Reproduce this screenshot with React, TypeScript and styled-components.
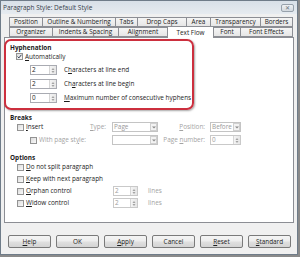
import React from "react";
import styled, { createGlobalStyle } from "styled-components";

const Global = createGlobalStyle`
  html, body { margin: 0; padding: 0; background: #8a8a8a; }
  body {
    font-family: "Open Sans", "Noto Sans", sans-serif;
    font-size: 6.4px;
    color: #1c1c1c;
  }
  * { box-sizing: border-box; }
`;

const Window = styled.div`
  width: 298px;
  height: 255px;
  border: 1px solid #6f7c89;
  background: #f0f0f0;
  display: flex;
  flex-direction: column;
`;

const TitleBar = styled.div`
  height: 13px;
  flex: none;
  display: flex;
  align-items: center;
  justify-content: space-between;
  padding: 0 3px 0 2px;
  background: linear-gradient(#d8e0e8, #e6ebf0);
  color: #36404a;
  font-size: 6.5px;
`;

const CloseButton = styled.div`
  width: 13px;
  height: 8px;
  border: 1px solid #97a1ab;
  border-radius: 2px;
  background: linear-gradient(#eef1f4, #d3d9df);
  display: flex;
  align-items: center;
  justify-content: center;
  color: #6b7580;
  font-size: 6px;
  line-height: 6px;
`;

const Body = styled.div`
  flex: 1;
  display: flex;
  flex-direction: column;
  padding: 3px 3px 0 3px;
`;

const TabStrip = styled.div`
  display: flex;
  flex-direction: column;
  padding-left: 5px;
`;

const TabRow = styled.div`
  display: flex;
  align-items: flex-end;
  height: 10px;
`;

const Tab = styled.div<{ $w: number; $active?: boolean }>`
  width: ${(p) => p.$w}px;
  height: ${(p) => (p.$active ? 12 : 10)}px;
  margin-bottom: ${(p) => (p.$active ? -1 : 0)}px;
  position: relative;
  z-index: ${(p) => (p.$active ? 2 : 0)};
  border: 1px solid #8c8e94;
  border-bottom: ${(p) => (p.$active ? "none" : "1px solid #8c8e94")};
  border-right: none;
  background: ${(p) =>
    p.$active ? "#ffffff" : "linear-gradient(#f5f5f5, #e6e6e6)"};
  display: flex;
  align-items: center;
  justify-content: center;
  white-space: nowrap;
  line-height: 8px;
  &:last-child {
    border-right: 1px solid #8c8e94;
  }
`;

const Panel = styled.div`
  height: 186px;
  border: 1px solid #8c8e94;
  background: #ffffff;
  display: flex;
  flex-direction: column;
`;

const Highlight = styled.section`
  width: 190px;
  height: 71px;
  margin: 1px 0 0 -1px;
  border: 2px solid #cc2f3e;
  border-radius: 7px;
  box-shadow: 1px 1px 2px rgba(0, 0, 0, 0.35);
  padding: 2px 0 0 4px;
  display: flex;
  flex-direction: column;
`;

const SectionTitle = styled.div<{ $top?: number }>`
  font-weight: 700;
  height: 9px;
  line-height: 9px;
  margin-top: ${(p) => p.$top ?? 0}px;
`;

const Section = styled.div`
  padding-left: 5px;
  display: flex;
  flex-direction: column;
`;

const CheckRow = styled.div<{ $indent: number }>`
  display: flex;
  align-items: center;
  gap: 2px;
  height: 9px;
  padding-left: ${(p) => p.$indent}px;
  white-space: nowrap;
`;

const Box = styled.span`
  width: 7px;
  height: 7px;
  flex: none;
  border: 1px solid #939393;
  background: linear-gradient(135deg, #dcdcdc, #fafafa);
  display: flex;
  align-items: center;
  justify-content: center;
`;

const Label = styled.span<{ $disabled?: boolean; $right?: boolean }>`
  color: ${(p) => (p.$disabled ? "#a3a3a3" : "#1c1c1c")};
  white-space: nowrap;
  line-height: 10px;
  justify-self: ${(p) => (p.$right ? "end" : "start")};
  padding-right: ${(p) => (p.$right ? 5 : 0)}px;
`;

const SpinList = styled.div`
  display: flex;
  flex-direction: column;
  gap: 4px;
  margin-top: 4px;
  padding-left: 20px;
`;

const SpinRow = styled.div`
  display: flex;
  align-items: center;
  gap: 7px;
  height: 10px;
`;

const SpinBox = styled.div<{ $w: number; $disabled?: boolean }>`
  width: ${(p) => p.$w}px;
  height: 10px;
  flex: none;
  border: 1px solid ${(p) => (p.$disabled ? "#c9c9c9" : "#a9abb2")};
  background: #fff;
  display: flex;
  color: ${(p) => (p.$disabled ? "#9c9c9c" : "#1c1c1c")};
`;

const FieldValue = styled.span`
  flex: 1;
  min-width: 0;
  overflow: hidden;
  padding-left: 1px;
  line-height: 8px;
  white-space: nowrap;
`;

const SpinButtons = styled.span`
  width: 7px;
  flex: none;
  border-left: 1px solid #d6d6d6;
  background: linear-gradient(90deg, #f4f4f4, #e6e6e6);
  display: flex;
  align-items: center;
  justify-content: center;
`;

const Combo = styled.div<{ $w: number }>`
  width: ${(p) => p.$w}px;
  height: 10px;
  border: 1px solid #c4c4c4;
  background: #fff;
  display: flex;
  color: #9a9a9a;
`;

const ComboArrow = styled.span`
  width: 7px;
  flex: none;
  border: 1px solid #d0d0d0;
  background: #f3f3f3;
  display: flex;
  align-items: center;
  justify-content: center;
`;

const BreaksGrid = styled.div`
  display: grid;
  grid-template-columns: 80px 22px 46px 52px 31px;
  grid-template-rows: 10px 10px;
  row-gap: 3px;
  align-items: center;
`;

const OptionsList = styled.div`
  display: flex;
  flex-direction: column;
  gap: 2px;
`;

const OptionRow = styled.div`
  display: grid;
  grid-template-columns: 93px 25px auto;
  column-gap: 10px;
  align-items: center;
  height: 10px;
`;

const ButtonRow = styled.div`
  display: flex;
  gap: 5px;
  margin-top: 12px;
  padding-left: 4px;
`;

const Button = styled.button`
  width: 43px;
  height: 13px;
  padding: 0;
  border: 1px solid #7a7a7a;
  border-radius: 2px;
  background: linear-gradient(#f4f4f4 0%, #ededed 48%, #e0e0e0 52%, #d4d4d4 100%);
  font: inherit;
  color: #1c1c1c;
  line-height: 11px;
`;

const Check = () => (
  <svg width="5" height="5" viewBox="0 0 5 5">
    <path d="M0.6 2.6 L1.9 3.9 L4.4 0.8" fill="none" stroke="#2f3b52" strokeWidth="1" />
  </svg>
);

const Arrows = () => (
  <svg width="4" height="7" viewBox="0 0 4 7">
    <path d="M0.5 2.8 L2 1.2 L3.5 2.8 Z" fill="#8a8a8a" />
    <path d="M0.5 4.2 L2 5.8 L3.5 4.2 Z" fill="#8a8a8a" />
  </svg>
);

const Down = () => (
  <svg width="4" height="3" viewBox="0 0 4 3">
    <path d="M0 0.5 L4 0.5 L2 2.6 Z" fill="#8a8a8a" />
  </svg>
);

const Spin = ({ w, v, disabled }: { w: number; v: string; disabled?: boolean }) => (
  <SpinBox $w={w} $disabled={disabled}>
    <FieldValue>{v}</FieldValue>
    <SpinButtons>
      <Arrows />
    </SpinButtons>
  </SpinBox>
);

const Dropdown = ({ w, v }: { w: number; v?: string }) => (
  <Combo $w={w}>
    <FieldValue>{v}</FieldValue>
    <ComboArrow>
      <Down />
    </ComboArrow>
  </Combo>
);

const row1 = [
  ["Position", 33],
  ["Outline & Numbering", 73],
  ["Tabs", 22],
  ["Drop Caps", 49],
  ["Area", 24],
  ["Transparency", 50],
  ["Borders", 33],
] as const;

const row2 = [
  ["Organizer", 43],
  ["Indents & Spacing", 66],
  ["Alignment", 49],
  ["Text Flow", 46],
  ["Font", 27],
  ["Font Effects", 53],
] as const;

export default function App() {
  return (
    <>
      <Global />
      <Window>
        <TitleBar>
          <span>Paragraph Style: Default Style</span>
          <CloseButton>✕</CloseButton>
        </TitleBar>
        <Body>
          <TabStrip>
            <TabRow>
              {row1.map(([t, w]) => (
                <Tab key={t} $w={w}>
                  {t}
                </Tab>
              ))}
            </TabRow>
            <TabRow>
              {row2.map(([t, w]) => (
                <Tab key={t} $w={w} $active={t === "Text Flow"}>
                  {t}
                </Tab>
              ))}
            </TabRow>
          </TabStrip>
          <Panel>
            <Highlight>
              <SectionTitle>Hyphenation</SectionTitle>
              <CheckRow $indent={6}>
                <Box>
                  <Check />
                </Box>
                <Label>
                  <u>A</u>utomatically
                </Label>
              </CheckRow>
              <SpinList>
                <SpinRow>
                  <Spin w={27} v="2" />
                  <Label>
                    C<u>h</u>aracters at line end
                  </Label>
                </SpinRow>
                <SpinRow>
                  <Spin w={27} v="2" />
                  <Label>
                    Ch<u>a</u>racters at line begin
                  </Label>
                </SpinRow>
                <SpinRow>
                  <Spin w={27} v="0" />
                  <Label>
                    <u>M</u>aximum number of consecutive hyphens
                  </Label>
                </SpinRow>
              </SpinList>
            </Highlight>

            <Section>
              <SectionTitle $top={3}>Breaks</SectionTitle>
              <BreaksGrid>
                <CheckRow $indent={7}>
                  <Box />
                  <Label>
                    <u>I</u>nsert
                  </Label>
                </CheckRow>
                <Label $disabled>
                  <u>T</u>ype:
                </Label>
                <Dropdown w={46} v="Page" />
                <Label $disabled $right>
                  <u>P</u>osition:
                </Label>
                <Dropdown w={31} v="Before" />

                <CheckRow $indent={20}>
                  <Box />
                  <Label $disabled>
                    With page st<u>y</u>le:
                  </Label>
                </CheckRow>
                <span />
                <Dropdown w={46} />
                <Label $disabled $right>
                  Page <u>n</u>umber:
                </Label>
                <Spin w={31} v="0" disabled />
              </BreaksGrid>

              <SectionTitle $top={8}>Options</SectionTitle>
              <OptionsList>
                <OptionRow>
                  <CheckRow $indent={7}>
                    <Box />
                    <Label>
                      <u>D</u>o not split paragraph
                    </Label>
                  </CheckRow>
                </OptionRow>
                <OptionRow>
                  <CheckRow $indent={7}>
                    <Box />
                    <Label>
                      <u>K</u>eep with next paragraph
                    </Label>
                  </CheckRow>
                </OptionRow>
                <OptionRow>
                  <CheckRow $indent={7}>
                    <Box />
                    <Label>
                      <u>O</u>rphan control
                    </Label>
                  </CheckRow>
                  <Spin w={25} v="2" disabled />
                  <Label $disabled>lines</Label>
                </OptionRow>
                <OptionRow>
                  <CheckRow $indent={7}>
                    <Box />
                    <Label>
                      <u>W</u>idow control
                    </Label>
                  </CheckRow>
                  <Spin w={25} v="2" disabled />
                  <Label $disabled>lines</Label>
                </OptionRow>
              </OptionsList>
            </Section>
          </Panel>
          <ButtonRow>
            <Button>
              <u>H</u>elp
            </Button>
            <Button>OK</Button>
            <Button>
              <u>A</u>pply
            </Button>
            <Button>Cancel</Button>
            <Button>
              <u>R</u>eset
            </Button>
            <Button>
              <u>S</u>tandard
            </Button>
          </ButtonRow>
        </Body>
      </Window>
    </>
  );
}
